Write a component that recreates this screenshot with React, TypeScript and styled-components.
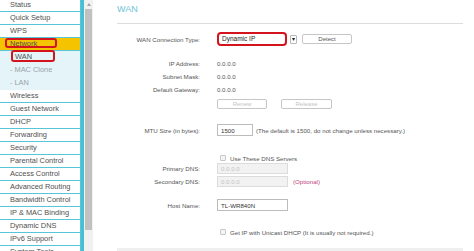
import React from 'react';
import styled, { createGlobalStyle } from 'styled-components';

const GlobalStyle = createGlobalStyle`
  html, body {
    margin: 0;
    padding: 0;
    background: #ffffff;
  }
  body {
    font-family: 'Liberation Sans', Arial, sans-serif;
    overflow: hidden;
  }
`;

type MenuItem = {
  label: string;
  sub?: boolean;
  active?: boolean;
  current?: boolean;
};

const menu: MenuItem[] = [
  { label: 'Status' },
  { label: 'Quick Setup' },
  { label: 'WPS' },
  { label: 'Network', active: true },
  { label: 'WAN', sub: true, current: true },
  { label: '- MAC Clone', sub: true },
  { label: '- LAN', sub: true },
  { label: 'Wireless' },
  { label: 'Guest Network' },
  { label: 'DHCP' },
  { label: 'Forwarding' },
  { label: 'Security' },
  { label: 'Parental Control' },
  { label: 'Access Control' },
  { label: 'Advanced Routing' },
  { label: 'Bandwidth Control' },
  { label: 'IP & MAC Binding' },
  { label: 'Dynamic DNS' },
  { label: 'IPv6 Support' },
  { label: 'System Tools' },
];

const App = () => (
  <>
    <GlobalStyle />
    <Page>
      <Sidebar>
        <Menu>
          {menu.map((item) => (
            <MenuRow key={item.label} $sub={item.sub} $active={item.active} $current={item.current}>
              {item.label}
              {(item.active || item.current) && <Marker $sub={item.sub} />}
            </MenuRow>
          ))}
        </Menu>
      </Sidebar>
      <ScrollRail>
        <ScrollArrow />
        <ScrollThumb />
      </ScrollRail>
      <Content>
        <Title>WAN</Title>
        <Divider />

        <Row $h={14} $mt={8}>
          <Label>WAN Connection Type:</Label>
          <Field>
            <Select>Dynamic IP</Select>
            <SelectArrow>▾</SelectArrow>
            <Button $w={50}>Detect</Button>
          </Field>
        </Row>

        <Row $h={13} $mt={11}>
          <Label>IP Address:</Label>
          <Value>0.0.0.0</Value>
        </Row>
        <Row $h={13} $mt={0}>
          <Label>Subnet Mask:</Label>
          <Value>0.0.0.0</Value>
        </Row>
        <Row $h={13} $mt={0}>
          <Label>Default Gateway:</Label>
          <Value>0.0.0.0</Value>
        </Row>
        <Row $h={10} $mt={3}>
          <span />
          <Field>
            <Button $w={50} $disabled>Renew</Button>
            <Button $w={51} $disabled $ml={14}>Release</Button>
          </Field>
        </Row>

        <Row $h={12} $mt={15}>
          <Label>MTU Size (in bytes):</Label>
          <Field>
            <Input $w={36}>1500</Input>
            <Note>(The default is 1500, do not change unless necessary.)</Note>
          </Field>
        </Row>

        <Row $h={12} $mt={16}>
          <span />
          <Field>
            <Checkbox />
            <Value>Use These DNS Servers</Value>
          </Field>
        </Row>
        <Row $h={11} $mt={-1}>
          <Label>Primary DNS:</Label>
          <Input $w={71} $disabled>0.0.0.0</Input>
        </Row>
        <Row $h={11} $mt={2}>
          <Label>Secondary DNS:</Label>
          <Field>
            <Input $w={71} $disabled>0.0.0.0</Input>
            <Optional>(Optional)</Optional>
          </Field>
        </Row>

        <Row $h={12} $mt={12}>
          <Label>Host Name:</Label>
          <Input $w={71}>TL-WR840N</Input>
        </Row>

        <Row $h={12} $mt={15}>
          <span />
          <Field>
            <Checkbox />
            <Value>Get IP with Unicast DHCP (It is usually not required.)</Value>
          </Field>
        </Row>

        <Footer />
      </Content>
    </Page>
  </>
);

const Page = styled.div`
  display: flex;
  width: 474px;
  height: 251px;
  overflow: hidden;
  background: #ffffff;
`;

const Sidebar = styled.div`
  width: 81px;
  flex-shrink: 0;
  border-right: 3px solid #45bfd2;
  overflow: hidden;
`;

const Menu = styled.div`
  display: flex;
  flex-direction: column;
  margin-top: -1px;
  border-right: 1px solid #56c6d8;
  background: #ffffff;
`;

const MenuRow = styled.div<{ $sub?: boolean; $active?: boolean; $current?: boolean }>`
  position: relative;
  flex-shrink: 0;
  height: 12px;
  line-height: 12px;
  padding-left: ${(p) => (p.$current ? '15px' : '10px')};
  font-size: 7.4px;
  color: ${(p) => (p.$sub && !p.$current ? '#9aa3a8' : '#505050')};
  background: ${(p) => (p.$active ? '#f6c300' : p.$sub ? '#e4f4f8' : '#ffffff')};
  border-bottom: 1px solid ${(p) => (p.$sub ? '#e4f4f8' : '#56c6d8')};
  white-space: nowrap;
`;

const Marker = styled.span<{ $sub?: boolean }>`
  position: absolute;
  top: 0;
  left: ${(p) => (p.$sub ? '11px' : '5px')};
  width: ${(p) => (p.$sub ? '40px' : '48px')};
  height: ${(p) => (p.$sub ? '8px' : '6px')};
  border: 2px solid #d4141c;
  border-radius: 3px;
  margin-top: ${(p) => (p.$sub ? '-1px' : '0')};
`;

const ScrollRail = styled.div`
  position: relative;
  width: 9px;
  flex-shrink: 0;
  background: #f1f1f1;
`;

const ScrollArrow = styled.div`
  position: absolute;
  top: 3px;
  left: 3px;
  width: 0;
  height: 0;
  border-left: 2px solid transparent;
  border-right: 2px solid transparent;
  border-bottom: 3px solid #a3a3a3;
`;

const ScrollThumb = styled.div`
  position: absolute;
  top: 9px;
  left: 1px;
  width: 7px;
  height: 221px;
  background: #c1c1c1;
`;

const Content = styled.div`
  flex: 1;
  display: flex;
  flex-direction: column;
  padding: 0 11px 0 24px;
  font-size: 6.15px;
  color: #555555;

  & > * {
    flex-shrink: 0;
  }
`;

const Title = styled.div`
  height: 18px;
  line-height: 18px;
  font-size: 9px;
  color: #6cc3d7;
`;

const Divider = styled.div`
  height: 1px;
  margin-top: 5px;
  background: #dddddd;
`;

const Row = styled.div<{ $h: number; $mt: number }>`
  display: grid;
  grid-template-columns: 83px 1fr;
  column-gap: 17px;
  align-items: center;
  height: ${(p) => p.$h}px;
  margin-top: ${(p) => p.$mt}px;
  white-space: nowrap;
`;

const Label = styled.span`
  text-align: right;
`;

const Value = styled.span`
  color: #555555;
`;

const Field = styled.div`
  display: flex;
  align-items: center;
  height: 100%;
`;

const Select = styled.div`
  box-sizing: border-box;
  width: 70px;
  height: 14px;
  line-height: 10px;
  padding-left: 3px;
  border: 2px solid #d4141c;
  border-radius: 4px;
  color: #222222;
  font-size: 6.5px;
`;

const SelectArrow = styled.div`
  box-sizing: border-box;
  width: 7px;
  height: 9px;
  margin-left: 3px;
  border: 1px solid #b8b8b8;
  border-radius: 1px;
  font-size: 6px;
  line-height: 7px;
  text-align: center;
  color: #222222;
`;

const Button = styled.div<{ $w: number; $disabled?: boolean; $ml?: number }>`
  box-sizing: border-box;
  width: ${(p) => p.$w}px;
  height: 10px;
  line-height: 8px;
  margin-left: ${(p) => (p.$ml !== undefined ? p.$ml : 5)}px;
  border: 1px solid #c6c6c6;
  border-radius: 2px;
  text-align: center;
  font-size: 6px;
  color: ${(p) => (p.$disabled ? '#c4c4c4' : '#555555')};
  background: #ffffff;

  &:first-child {
    margin-left: 0;
  }
`;

const Input = styled.div<{ $w: number; $disabled?: boolean }>`
  box-sizing: border-box;
  width: ${(p) => p.$w}px;
  height: 100%;
  display: flex;
  align-items: center;
  padding-left: 3px;
  border: 1px solid ${(p) => (p.$disabled ? '#dcdcdc' : '#bcbcbc')};
  background: ${(p) => (p.$disabled ? '#f2f2f2' : '#ffffff')};
  color: ${(p) => (p.$disabled ? '#c2c2c2' : '#333333')};
`;

const Note = styled.span`
  margin-left: 3px;
  color: #555555;
`;

const Optional = styled.span`
  margin-left: 5px;
  color: #c2427a;
`;

const Checkbox = styled.div`
  box-sizing: border-box;
  width: 6px;
  height: 6px;
  margin: 0 4px 0 3px;
  border: 1px solid #c8c8c8;
  border-radius: 1px;
  background: #f4f4f4;
`;

const Footer = styled.div`
  height: 8px;
  margin-top: 10px;
  background: #efefef;
`;

export default App;
